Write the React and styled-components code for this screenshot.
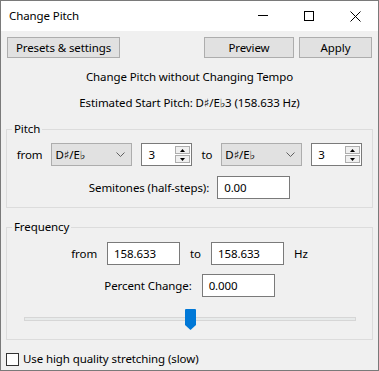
import React from 'react'
import styled, { createGlobalStyle } from 'styled-components'

const GlobalStyle = createGlobalStyle`
    body {
        margin: 0;
        background: #ffffff;
        font-family: "Noto Sans", "DejaVu Sans", sans-serif;
        font-size: 11.5px;
        letter-spacing: -0.1px;
        color: #000000;
    }
`

const NOTE = 'D\u266F/E\u266D'

export default function App() {
    return (
        <>
            <GlobalStyle />
            <Window>
                <TitleBar>
                    <Title>Change Pitch</Title>
                    <CaptionButton>
                        <svg width="10" height="10" viewBox="0 0 10 10">
                            <line x1="0" y1="4.5" x2="10" y2="4.5" stroke="#000" strokeWidth="1" />
                        </svg>
                    </CaptionButton>
                    <CaptionButton>
                        <svg width="10" height="10" viewBox="0 0 10 10">
                            <rect x="0.5" y="0.5" width="9" height="9" fill="none" stroke="#000" strokeWidth="1" />
                        </svg>
                    </CaptionButton>
                    <CaptionButton>
                        <svg width="11" height="11" viewBox="0 0 11 11">
                            <path d="M0.5 0.5 L10.5 10.5 M10.5 0.5 L0.5 10.5" stroke="#000" strokeWidth="1" />
                        </svg>
                    </CaptionButton>
                </TitleBar>

                <Body>
                    <ButtonRow>
                        <Button $w={113}>Presets &amp; settings</Button>
                        <Spacer />
                        <Button $w={90}>Preview</Button>
                        <Button $w={73}>Apply</Button>
                    </ButtonRow>

                    <Caption $mt={11}>Change Pitch without Changing Tempo</Caption>
                    <Caption $mt={10}>Estimated Start Pitch: {NOTE}3 (158.633 Hz)</Caption>

                    <Group $mt={10}>
                        <Legend>Pitch</Legend>
                        <GroupInner $pt={6} $pb={8}>
                            <Row $gap={9}>
                                <Label>from</Label>
                                <Combo note={NOTE} />
                                <Spin value="3" />
                                <Label>to</Label>
                                <Combo note={NOTE} />
                                <Spin value="3" />
                            </Row>
                            <Row $gap={8} $mt={10}>
                                <Label>Semitones (half-steps):</Label>
                                <TextBox>0.00</TextBox>
                            </Row>
                        </GroupInner>
                    </Group>

                    <Group $mt={11}>
                        <Legend>Frequency</Legend>
                        <GroupInner $pt={7} $pb={9}>
                            <Row $gap={10}>
                                <Label>from</Label>
                                <TextBox>158.633</TextBox>
                                <Label>to</Label>
                                <TextBox>158.633</TextBox>
                                <Label>Hz</Label>
                            </Row>
                            <Row $gap={10} $mt={9}>
                                <Label>Percent Change:</Label>
                                <TextBox>0.000</TextBox>
                            </Row>
                            <Slider $mt={12} value={0.5} />
                        </GroupInner>
                    </Group>

                    <CheckRow>
                        <CheckBox />
                        <span>Use high quality stretching (slow)</span>
                    </CheckRow>
                </Body>
            </Window>
        </>
    )
}

const Combo = ({ note }) => (
    <ComboBox>
        <ComboText>{note}</ComboText>
        <svg width="9" height="5" viewBox="0 0 9 5">
            <path d="M0.5 0.5 L4.5 4.5 L8.5 0.5" fill="none" stroke="#606060" strokeWidth="1" />
        </svg>
    </ComboBox>
)

const Spin = ({ value }) => (
    <SpinBox>
        <SpinValue>{value}</SpinValue>
        <SpinArrows>
            <SpinButton>
                <svg width="5" height="3" viewBox="0 0 5 3">
                    <path d="M0 3 L2.5 0 L5 3 Z" fill="#000" />
                </svg>
            </SpinButton>
            <SpinButton>
                <svg width="5" height="3" viewBox="0 0 5 3">
                    <path d="M0 0 L5 0 L2.5 3 Z" fill="#000" />
                </svg>
            </SpinButton>
        </SpinArrows>
    </SpinBox>
)

const Slider = ({ value, $mt }) => (
    <SliderWrap $mt={$mt}>
        <Track />
        <Thumb style={{ left: `calc(${value * 100}% - 5px)` }}>
            <svg width="11" height="21" viewBox="0 0 11 21">
                <path d="M0 1 Q0 0 1 0 H10 Q11 0 11 1 V16 L5.5 21 L0 16 Z" fill="#0078d7" />
            </svg>
        </Thumb>
    </SliderWrap>
)

const Window = styled.div`
    width: 379px;
    height: 371px;
    box-sizing: border-box;
    border: 1px solid #7a7a7a;
    background: #f0f0f0;
    display: flex;
    flex-direction: column;
    overflow: hidden;
`

const TitleBar = styled.div`
    height: 30px;
    background: #ffffff;
    display: flex;
    align-items: center;
    flex-shrink: 0;
`

const Title = styled.div`
    flex: 1;
    padding-left: 8px;
    line-height: 16px;
`

const CaptionButton = styled.div`
    width: 46px;
    height: 30px;
    display: flex;
    align-items: center;
    justify-content: center;
`

const Body = styled.div`
    flex: 1;
    padding: 6px 5px 0;
    display: flex;
    flex-direction: column;
`

const ButtonRow = styled.div`
    display: flex;
    gap: 5px;
    margin: 0 1px;
`

const Spacer = styled.div`
    flex: 1;
`

const Button = styled.div`
    width: ${({ $w }) => $w}px;
    height: 21px;
    box-sizing: border-box;
    border: 1px solid #adadad;
    background: #e1e1e1;
    display: flex;
    align-items: center;
    justify-content: center;
    white-space: nowrap;
`

const Caption = styled.div`
    margin-top: ${({ $mt }) => $mt}px;
    line-height: 16px;
    text-align: center;
`

const Group = styled.fieldset`
    margin: ${({ $mt }) => $mt}px 0 0;
    padding: 0;
    border: 1px solid #dcdcdc;
    min-width: 0;
`

const Legend = styled.legend`
    margin-left: 5px;
    padding: 0 2px;
    line-height: 16px;
`

const GroupInner = styled.div`
    padding: ${({ $pt }) => $pt}px 0 ${({ $pb }) => $pb}px;
    display: flex;
    flex-direction: column;
    align-items: center;
`

const Row = styled.div`
    display: flex;
    align-items: center;
    justify-content: center;
    gap: ${({ $gap }) => $gap}px;
    margin-top: ${({ $mt }) => $mt || 0}px;
`

const Label = styled.span`
    white-space: nowrap;
    line-height: 16px;
`

const ComboBox = styled.div`
    width: 81px;
    height: 23px;
    box-sizing: border-box;
    border: 1px solid #adadad;
    background: #e1e1e1;
    display: flex;
    align-items: center;
    padding: 0 6px 0 3px;
`

const ComboText = styled.span`
    flex: 1;
`

const SpinBox = styled.div`
    width: 51px;
    height: 23px;
    box-sizing: border-box;
    border: 1px solid #7a7a7a;
    background: #ffffff;
    display: flex;
`

const SpinValue = styled.div`
    flex: 1;
    padding-left: 6px;
    display: flex;
    align-items: center;
`

const SpinArrows = styled.div`
    width: 15px;
    padding: 2px 1px 2px 0;
    display: flex;
    flex-direction: column;
    gap: 1px;
`

const SpinButton = styled.div`
    flex: 1;
    box-sizing: border-box;
    border: 1px solid #adadad;
    background: #f0f0f0;
    display: flex;
    align-items: center;
    justify-content: center;
`

const TextBox = styled.div`
    width: 73px;
    height: 23px;
    box-sizing: border-box;
    border: 1px solid #7a7a7a;
    background: #ffffff;
    padding-left: 6px;
    display: flex;
    align-items: center;
`

const SliderWrap = styled.div`
    position: relative;
    width: 332px;
    height: 21px;
    margin-top: ${({ $mt }) => $mt}px;
`

const Track = styled.div`
    margin-top: 8px;
    height: 4px;
    box-sizing: border-box;
    border: 1px solid #d6d6d6;
    background: #e7eaea;
`

const Thumb = styled.div`
    position: absolute;
    top: 0;
    width: 11px;
    height: 21px;
    display: flex;
`

const CheckRow = styled.label`
    margin-top: 11px;
    display: flex;
    align-items: center;
    gap: 4px;
    line-height: 16px;
`

const CheckBox = styled.span`
    width: 13px;
    height: 13px;
    box-sizing: border-box;
    border: 1px solid #333333;
    background: #ffffff;
`
